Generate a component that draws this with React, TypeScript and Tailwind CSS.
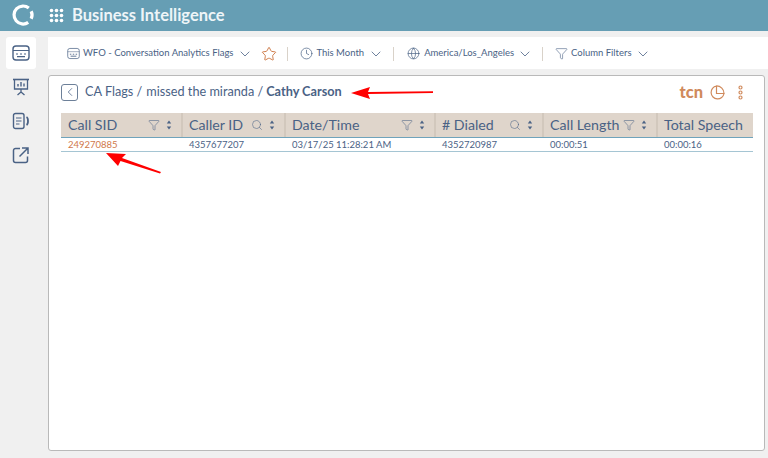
import React from "react";
import { ChevronDown, ChevronLeft, Clock, Globe, Funnel, Search, Star } from "lucide-react";

const navy = "#4a6285";

function Sort() {
  return (
    <svg width="6" height="10" viewBox="0 0 6 10" className="shrink-0">
      <path d="M3 0.5 L5.2 3.5 H0.8 Z M3 9.5 L5.2 6.5 H0.8 Z" fill="#4a6285" />
    </svg>
  );
}

function KeyboardIcon({ size = 18, w = 1.4, color = navy }: { size?: number; w?: number; color?: string }) {
  return (
    <svg width={size} height={size} viewBox="0 0 18 18" fill="none" stroke={color} strokeWidth={w}>
      <rect x="1" y="2" width="16" height="14" rx="3" />
      <path d="M1 6.500 H17" strokeWidth={w * 0.7} />
      <path d="M4 10 H6 M8 10 H10 M12 10 H14 M5 12.7 H13" strokeWidth="1.2" />
    </svg>
  );
}

function Col({ w, label, icon, last, first }: { w: string; label: string; icon?: "filter" | "search"; last?: boolean; first?: boolean }) {
  return (
    <div className={`${w} flex items-center ${first ? "pl-[7px]" : "pl-[6px]"} pr-[9px] h-full ${last ? "" : "border-r-2 border-[#d2c8bd]"}`}>
      <span className="text-[14.2px] whitespace-nowrap flex-1 text-[#4a6285]">{label}</span>
      {icon === "filter" && <Funnel size={12} strokeWidth={1.1} color={navy} className="mr-[6px] shrink-0" />}
      {icon === "search" && <Search size={12} strokeWidth={1.1} color={navy} className="mr-[6px] shrink-0" />}
      {icon && <Sort />}
    </div>
  );
}

function Cell({ w, children, color = "#4a6285" }: { w: string; children: React.ReactNode; color?: string }) {
  return (
    <div className={`${w} pl-[7px] pt-px text-[9.5px] whitespace-nowrap`} style={{ color }}>
      {children}
    </div>
  );
}

function ToolItem({ icon, label, sep = true, textMl, chevMl }: { icon: React.ReactNode; label: string; sep?: boolean; textMl: string; chevMl: string }) {
  return (
    <div className="flex items-center">
      {icon}
      <span className={`text-[9.5px] text-[#4a6285] ${textMl} whitespace-nowrap`}>{label}</span>
      <ChevronDown size={16} strokeWidth={1.2} color={navy} className={chevMl} />
      {sep && <div className="w-px h-[14px] bg-[#d9d2c9] ml-[9px]" />}
    </div>
  );
}

export default function App() {
  const widths = ["w-[121px]", "w-[103px]", "w-[150px]", "w-[108px]", "w-[114px]", "w-[96px]"];
  const heads = ["w-[122px]", "w-[103px]", "w-[150px]", "w-[108px]", "w-[114px]", "w-[95px]"];
  return (
    <div className="relative w-[768px] h-[458px] overflow-hidden bg-[#f0f0f0] flex flex-col" style={{ fontFamily: "Lato, 'Open Sans', sans-serif" }}>
      <header className="h-[31px] bg-[#669eb4] flex items-center pl-[12px] shrink-0">
        <svg width="23" height="23" viewBox="0 0 23 23" fill="none" stroke="#fff" strokeWidth="3.2">
          <path d="M16.800 4.100 A9 9 0 1 0 16.200 18.400" />
          <path d="M19.200 7.200 A9 9 0 0 1 19.200 14.800" />
        </svg>
        <svg width="15" height="15" viewBox="0 0 15 15" fill="#fff" className="ml-[14px]">
          {[2.5, 7.5, 12.5].map((y) =>
            [2.5, 7.5, 12.5].map((x) => <circle key={`${x}-${y}`} cx={x} cy={y} r="1.8" />)
          )}
        </svg>
        <span className="ml-[8px] text-[16.5px] font-bold text-[#eef5f8]">Business Intelligence</span>
      </header>
      <div className="flex flex-1 min-h-0">
        <aside className="w-[48px] shrink-0 flex flex-col items-start pl-[6px] pt-[6px]">
          <div className="w-[30px] h-[32px] bg-white rounded-[3px] flex items-center justify-center">
            <KeyboardIcon />
          </div>
          <div className="w-[30px] flex flex-col items-center gap-[16px] mt-[9px]">
            <svg width="18" height="18" viewBox="0 0 18 18" fill="none" stroke={navy} strokeWidth="1.3">
              <path d="M1 1.500 H17" strokeWidth="1.6" />
              <path d="M2.500 1.500 V11 H15.500 V1.500" />
              <path d="M6 8.500 V6 M9 8.500 V4 M12 8.500 V5.500" strokeWidth="1.4" />
              <path d="M9 11 V14 M9 14 L5.500 17 M9 14 L12.500 17" />
            </svg>
            <svg width="18" height="18" viewBox="0 0 18 18" fill="none" stroke={navy} strokeWidth="1.4">
              <rect x="1.500" y="1.500" width="10.500" height="15" rx="2" />
              <path d="M4 6 H9.500 M4 9 H9.500 M4 12 H7.500" strokeWidth="1.2" />
              <path d="M14.500 5 C16.500 6 16.500 12 14.500 13" strokeWidth="1.8" />
            </svg>
            <svg width="18" height="18" viewBox="0 0 18 18" fill="none" stroke={navy} strokeWidth="1.5">
              <path d="M8 2.500 H3.500 A2 2 0 0 0 1.500 4.500 V14.500 A2 2 0 0 0 3.500 16.500 H13.500 A2 2 0 0 0 15.500 14.500 V10.500" />
              <path d="M7.500 10.500 L15.500 2.500 M10 2 H16 V8" />
            </svg>
          </div>
        </aside>
        <main className="flex-1 min-w-0 flex flex-col pt-[6px]">
          <div className="h-[32px] bg-white flex items-center pl-[19px] pt-px shrink-0">
            <ToolItem icon={<KeyboardIcon size={13} w={1} />} label="WFO - Conversation Analytics Flags" sep={false} textMl="ml-[3px]" chevMl="ml-[4px]" />
            <Star size={16} strokeWidth={1.5} color="#d07f4e" className="ml-[8px]" />
            <div className="w-px h-[14px] bg-[#d9d2c9] ml-[10px] mr-[12px]" />
            <ToolItem icon={<Clock size={13} strokeWidth={1.3} color={navy} />} label="This Month" textMl="ml-[3px]" chevMl="ml-[4px]" />
            <div className="w-[13px]" />
            <ToolItem icon={<Globe size={13} strokeWidth={1.3} color={navy} />} label="America/Los_Angeles" textMl="ml-[4px]" chevMl="ml-[3px]" />
            <div className="w-[12px]" />
            <ToolItem icon={<Funnel size={13} strokeWidth={1.1} color={navy} />} label="Column Filters" sep={false} textMl="ml-[3px]" chevMl="ml-[3px]" />
          </div>
          <section className="mt-[6px] mr-[3px] mb-[7px] flex-1 bg-white border border-[#b9b9b9] rounded-[3px] pl-[12px] pr-[11px] flex flex-col">
            <div className="h-[37px] flex items-center pb-[5px] shrink-0">
              <div className="w-[17px] h-[17px] border border-[#6d8099] rounded-[3px] flex items-center justify-center">
                <ChevronLeft size={14} strokeWidth={1.3} color={navy} />
              </div>
              <span className="ml-[7px] text-[12.7px] text-[#4a6285] whitespace-nowrap">CA Flags /</span>
              <span className="ml-[4px] text-[12.7px] text-[#4a6285] whitespace-nowrap">missed the miranda /</span>
              <span className="ml-[3px] text-[12.7px] font-bold text-[#4a6285] whitespace-nowrap">Cathy Carson</span>
              <div className="ml-auto flex items-center pr-[10px]">
                <span className="text-[16.5px] font-black text-[#d08a5c] leading-none">tcn</span>
                <svg width="15" height="15" viewBox="0 0 15 15" fill="none" stroke="#d08a5c" strokeWidth="1.200" className="ml-[7px]">
                  <path d="M6.500 1 A6.500 6.500 0 1 0 14 8.500 H6.500 Z" />
                  <path d="M6.500 0.900 A7.500 7.500 0 0 1 14 8.500" />
                </svg>
                <svg width="5" height="15" viewBox="0 0 5 15" fill="none" stroke="#d08a5c" strokeWidth="1.200" className="ml-[13px]">
                  <circle cx="2.500" cy="2.500" r="1.500" />
                  <circle cx="2.500" cy="7.500" r="1.500" />
                  <circle cx="2.500" cy="12.500" r="1.500" />
                </svg>
              </div>
            </div>
            <div className="flex h-[24px] bg-[#dfd5cb] border-b border-[#6fa3bb] shrink-0 box-content">
              <Col w={heads[0]} label="Call SID" icon="filter" first />
              <Col w={heads[1]} label="Caller ID" icon="search" />
              <Col w={heads[2]} label="Date/Time" icon="filter" />
              <Col w={heads[3]} label="# Dialed" icon="search" />
              <Col w={heads[4]} label="Call Length" icon="filter" />
              <Col w={heads[5]} label="Total Speech" last />
            </div>
            <div className="flex items-center h-[14px] border-b border-[#a5c5d3] shrink-0">
              <Cell w={widths[0]} color="#d0784a">249270885</Cell>
              <Cell w={widths[1]}>4357677207</Cell>
              <Cell w={widths[2]}>03/17/25 11:28:21 AM</Cell>
              <Cell w={widths[3]}>4352720987</Cell>
              <Cell w={widths[4]}>00:00:51</Cell>
              <Cell w={widths[5]}>00:00:16</Cell>
            </div>
          </section>
        </main>
      </div>
      <svg width="768" height="458" className="absolute inset-0 pointer-events-none" fill="#ff0000" stroke="none">
        <path d="M351 93 L370 87 L368 92 L433 91.300 L433 93 L368 94 L370 99 Z" />
        <path d="M106 153 L126 154 L122 158 L161 172 L160 173.500 L120.500 161 L118 166 Z" />
      </svg>
    </div>
  );
}
